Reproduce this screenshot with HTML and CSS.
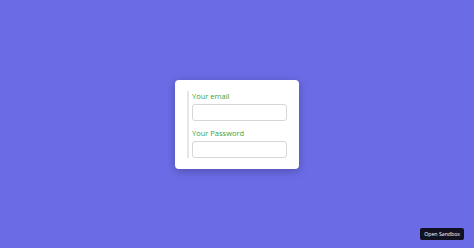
FILE: index.html
```html
<!DOCTYPE html>
<html>
<head>
<meta charset="utf-8">
<link rel="stylesheet" href="styles.css">
</head>
<body>
<main class="stage">
  <div class="card">
    <form class="form">
      <label class="field">
        <span class="label">Your email</span>
        <input class="input" type="email">
      </label>
      <label class="field">
        <span class="label">Your Password</span>
        <input class="input" type="password">
      </label>
    </form>
  </div>
</main>
<a class="sandbox">Open Sandbox</a>
</body>
</html>
```
FILE: styles.css
```css
html, body {
  margin: 0;
  height: 100%;
}
body {
  background: #6b6be6;
  font-family: "Open Sans", "Liberation Sans", sans-serif;
  position: relative;
}
.stage {
  height: 100%;
  display: flex;
  align-items: center;
  justify-content: center;
}
.card {
  width: 124px;
  box-sizing: border-box;
  background: #fff;
  border-radius: 4px;
  padding: 11px 12px 11px 12px;
  box-shadow: 0 2px 8px rgba(0, 0, 0, 0.25);
}
.form {
  margin: 0;
  border-left: 2px solid #e6e6e6;
  padding-left: 3px;
  display: flex;
  flex-direction: column;
  gap: 7px;
}
.field {
  display: flex;
  flex-direction: column;
  gap: 3px;
}
.label {
  color: #3c9f3c;
  font-size: 7.5px;
  line-height: 10px;
}
.input {
  display: block;
  margin: 0;
  height: 17px;
  box-sizing: border-box;
  border: 1px solid #d6d6d6;
  border-radius: 3px;
  background: #fff;
  width: 100%;
  padding: 0 4px;
}
.sandbox {
  position: absolute;
  right: 10px;
  bottom: 8px;
  background: #111122;
  color: #fff;
  font-size: 5.2px;
  padding: 3px 4px;
  border-radius: 2px;
  line-height: 6px;
}
```
